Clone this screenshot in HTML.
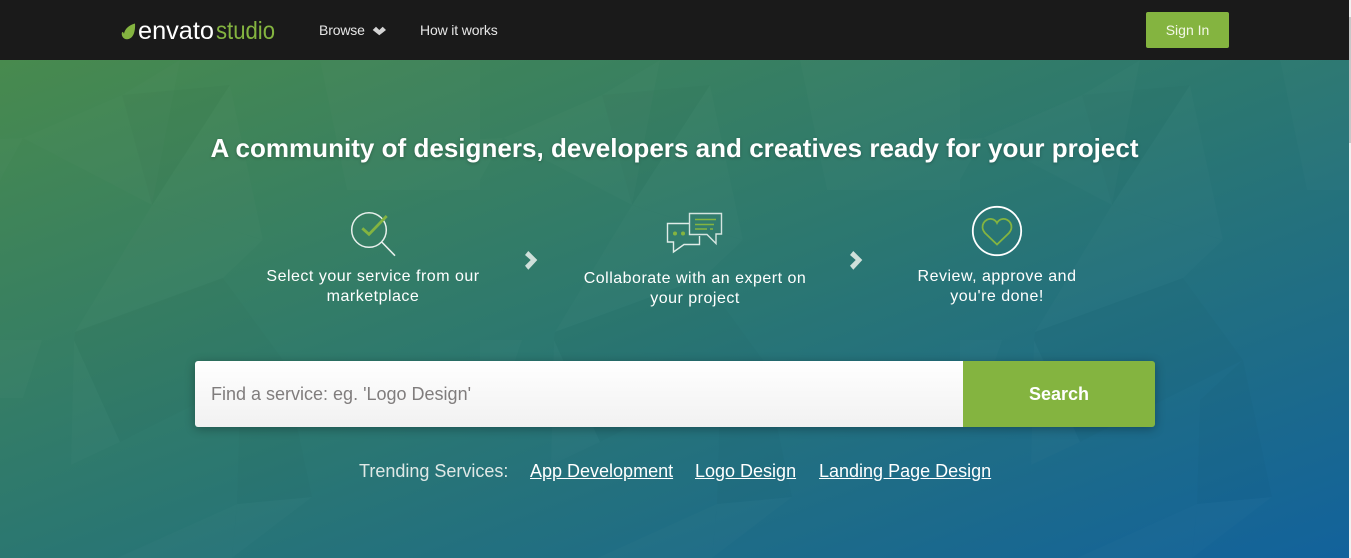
<!DOCTYPE html>
<html><head><meta charset="utf-8"><title>Envato Studio</title>
<style>
html,body{margin:0;padding:0;width:1351px;height:558px;overflow:hidden;font-family:"Liberation Sans",Arial,sans-serif;background:#1a1a1a}
#hero{position:absolute;left:0;top:60px;width:1351px;height:498px;background:linear-gradient(to bottom right,#488a4e 0%,#2b7771 50%,#12629c 100%)}
#hero svg{position:absolute;left:0;top:0}
#nav{position:absolute;left:0;top:0;width:1351px;height:60px;background:#1a1a1a}
.t{position:absolute;white-space:nowrap;color:#fff}
.nl{font-size:14px;color:#e6e6e6;top:22px;line-height:17px;letter-spacing:-.15px}
#signin{position:absolute;left:1146px;top:12px;width:83px;height:36px;background:#84b440;border-radius:2px;color:#f2f7e6;font-size:14px;line-height:36px;text-align:center}
h1{position:absolute;margin:0;left:0;width:1349px;top:132px;text-align:center;font-size:26px;line-height:32px;font-weight:bold;color:#fff;text-shadow:0 1px 3px rgba(0,0,0,.25);white-space:nowrap;letter-spacing:.02px}
.step{font-size:16px;line-height:20px;text-align:center;letter-spacing:.5px;color:#fff}
#box{position:absolute;left:195px;top:361px;width:960px;height:66px;border-radius:3px;box-shadow:0 2px 10px rgba(0,0,0,.3);overflow:hidden}
#inp{position:absolute;left:0;top:0;width:768px;height:66px;background:linear-gradient(#fff,#f1f1f1);color:#807d7d;font-size:18px;line-height:66px;text-indent:16px}
#btn{position:absolute;left:768px;top:0;width:192px;height:66px;background:#84b440;color:#fff;font-size:18px;font-weight:bold;line-height:66px;text-align:center}
.tr{font-size:18px;line-height:22px;top:460px}
.tr a{color:#fff;text-decoration:underline}
#sb{position:absolute;left:1349px;top:0;width:2px;height:558px;background:#f1f1f1}
#sb i{position:absolute;left:0;top:17px;width:2px;height:126px;background:#c8c8c8}
</style></head><body>
<div id="hero">
<svg width="1351" height="498" viewBox="0 60 1351 498" xmlns="http://www.w3.org/2000/svg">
<defs><g id="f">
<g fill="#fff" fill-opacity=".016">
<polygon points="180,60 122,95 23,138 152,205"/>
<polygon points="152,205 263,240 223,278 75,332"/>
<polygon points="152,205 230,85 263,240"/>
<polygon points="0,139 23,138 0,180"/>
<polygon points="347,190 480,190 480,60 320,60"/>
<polygon points="0,340 42,340 23,398 0,398"/>
<polygon points="74,340 120,442 71,465"/>
<polygon points="237,504 117,558 232,558"/>
<polygon points="237,504 232,558 312,497"/>
</g>
<g fill="#000" fill-opacity=".014">
<polygon points="122,95 230,85 152,205"/>
<polygon points="75,332 223,278 283,360 120,442 74,340"/>
<polygon points="237,504 312,497 283,360 240,400"/>
</g>
</g></defs>
<use href="#f" x="0"/><use href="#f" x="480"/><use href="#f" x="960"/>
</svg>
</div>
<div id="nav">
<svg style="position:absolute;left:118px;top:18px" width="165" height="26" viewBox="0 0 165 26" xmlns="http://www.w3.org/2000/svg">
<path d="M17 5.500C17.500 12 16 21 9 21.300C5 21.500 3 17 4 14.500C4.500 13.500 5.500 14 6 16C6.500 11 11 7 17 5.500Z" fill="#84b440"/>
<text x="20" y="21" font-family="Liberation Sans" font-size="25" fill="#fff" textLength="76" lengthAdjust="spacingAndGlyphs">envato</text>
<text x="98" y="21" font-family="Liberation Sans" font-size="25" fill="#84b440" textLength="59" lengthAdjust="spacingAndGlyphs">studio</text>
</svg>
<div class="t nl" style="left:319px">Browse</div>
<svg style="position:absolute;left:372px;top:25px" width="15" height="12" viewBox="372 25 15 12"><polygon points="372.700,30 376,26.700 379.300,30 382.700,26.700 386,30 379.300,35.300" fill="#d4d4d4"/></svg>
<div class="t nl" style="left:420px">How it works</div>
<div id="signin">Sign In</div>
</div>
<h1>A community of designers, developers and creatives ready for your project</h1>

<svg style="position:absolute;left:345px;top:208px" width="56" height="52" viewBox="345 208 56 52" xmlns="http://www.w3.org/2000/svg">
<circle cx="369" cy="230" r="17.300" fill="none" stroke="#e8f0ec" stroke-width="1.500"/>
<path d="M381.700 242L395 255.700" stroke="#e8f0ec" stroke-width="1.600" fill="none"/>
<path d="M362.300 228.300L369 234.300L386.700 216" stroke="#84b440" stroke-width="2.800" fill="none"/>
</svg>
<div class="t step" style="left:223px;width:300px;top:267px">Select your service from our<br>marketplace</div>

<svg style="position:absolute;left:523px;top:249px" width="17" height="22" viewBox="523 249 17 22"><polygon points="525,255 528.300,251 537.300,260 528.300,269.700 525,265.700 530.700,260" fill="#cfe0da"/></svg>

<svg style="position:absolute;left:660px;top:208px" width="70" height="50" viewBox="660 208 70 50" xmlns="http://www.w3.org/2000/svg">
<path d="M689.500 223.500H667.500V242H673.500V252L684 244.500H699.500V236" fill="none" stroke="#e0ece8" stroke-width="1.400"/>
<path d="M689.500 213.500H721.500V234H716V243.500L707 234.500H689.500Z" fill="none" stroke="#d4e4df" stroke-width="1.400"/>
<circle cx="675" cy="233.500" r="2" fill="#84b440"/><circle cx="683" cy="233.500" r="2" fill="#84b440"/>
<path d="M695 219.500H716M695 224.500H714M695 229H707M710 229H713" stroke="#84b440" stroke-width="1.500" fill="none"/>
</svg>
<div class="t step" style="left:545px;width:300px;top:269px">Collaborate with an expert on<br>your project</div>

<svg style="position:absolute;left:848px;top:249px" width="17" height="22" viewBox="848 249 17 22"><polygon points="850,255 853.300,251 862.300,260 853.300,269.700 850,265.700 855.700,260" fill="#cfe0da"/></svg>

<svg style="position:absolute;left:970px;top:204px" width="54" height="54" viewBox="970 204 54 54" xmlns="http://www.w3.org/2000/svg">
<circle cx="997" cy="231" r="24.200" fill="none" stroke="#fff" stroke-width="1.800"/>
<path d="M997 244.500L985 233C979 226 985 218 991.500 219C994 219.400 996 221 997 223C998 221 1000 219.400 1002.500 219C1009 218 1015 226 1009 233Z" fill="none" stroke="#84b440" stroke-width="1.800"/>
</svg>
<div class="t step" style="left:847px;width:300px;top:267px">Review, approve and<br>you're done!</div>

<div id="box"><div id="inp">Find a service: eg. 'Logo Design'</div><div id="btn">Search</div></div>

<div class="t tr" style="left:359px;color:#dfe8e6">Trending Services:</div>
<div class="t tr" style="left:530px"><a>App Development</a></div>
<div class="t tr" style="left:695px"><a>Logo Design</a></div>
<div class="t tr" style="left:819px"><a>Landing Page Design</a></div>
<div id="sb"><i></i></div>
</body></html>
